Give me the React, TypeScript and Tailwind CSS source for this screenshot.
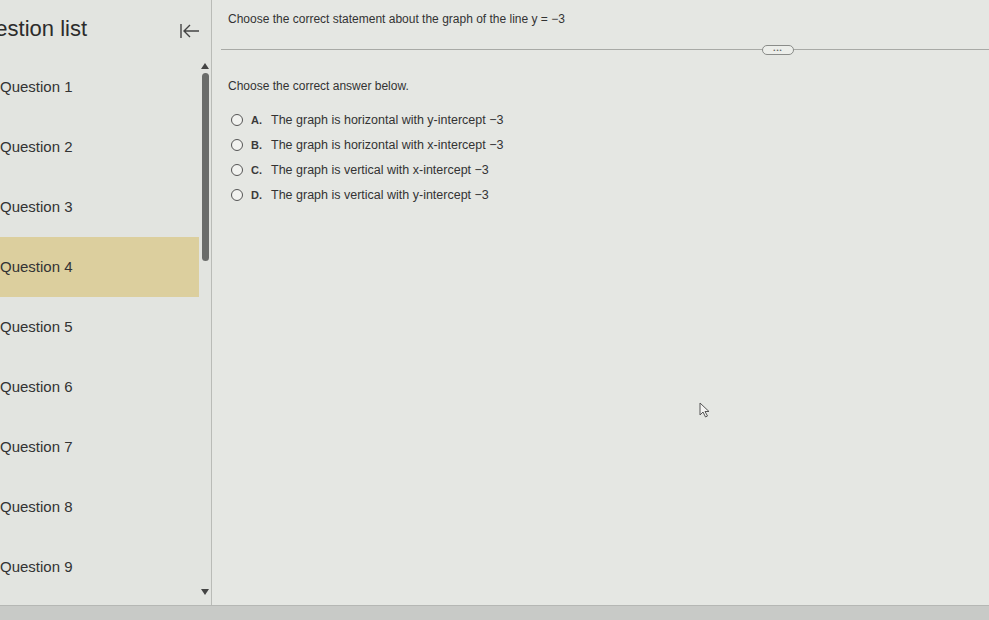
import React from 'react';

const questions = [1, 2, 3, 4, 5, 6, 7, 8, 9];

const options = [
    { letter: 'A', text: 'The graph is horizontal with y-intercept \u22123' },
    { letter: 'B', text: 'The graph is horizontal with x-intercept \u22123' },
    { letter: 'C', text: 'The graph is vertical with x-intercept \u22123' },
    { letter: 'D', text: 'The graph is vertical with y-intercept \u22123' },
];

function Sidebar() {
    return (
        <aside className="w-[212px] shrink-0 flex flex-col bg-[#e2e4e0] border-r border-[#b9bbb7] overflow-hidden">
            <div className="h-[57px] shrink-0 flex items-center justify-between pr-[10px]">
                <span className="ml-[-34px] text-[22px] text-[#2c2c2c] leading-none pt-[1px]">Question list</span>
                <svg width="22" height="18" viewBox="0 0 22 18" className="text-[#444] mt-[4px]">
                    <path d="M2 2v14M20 9H5M11 3L5 9l6 6" fill="none" stroke="currentColor" strokeWidth="1.4" />
                </svg>
            </div>
            <div className="flex flex-1">
                <ul className="w-[200px] flex flex-col">
                    {questions.map((n) => (
                        <li
                            key={n}
                            className={`h-[60px] flex items-center text-[15px] text-[#333] ${n === 4 ? 'bg-[#dccf9e]' : ''}`}
                        >
                            Question {n}
                        </li>
                    ))}
                </ul>
                <div className="w-[12px] flex flex-col items-center pt-[6px]">
                    <span className="w-0 h-0 border-x-[4px] border-x-transparent border-b-[6px] border-b-[#444]" />
                    <span className="w-[7px] h-[188px] mt-[4px] rounded-full bg-[#6a6c6a]" />
                    <span className="flex-1" />
                    <span className="w-0 h-0 border-x-[4px] border-x-transparent border-t-[6px] border-t-[#444] mb-[10px]" />
                </div>
            </div>
        </aside>
    );
}

function Radio() {
    return <span className="w-[12px] h-[12px] shrink-0 rounded-full border border-[#555] bg-[#f2f3f0]" />;
}

function Main() {
    return (
        <main className="flex-1 relative flex flex-col bg-[#e5e7e3]">
            <div className="h-[49px] shrink-0 pl-[16px] pt-[10px] text-[12px] text-[#333]">
                Choose the correct statement about the graph of the line y = {'\u2212'}3
            </div>
            <div className="relative ml-[9px] border-t border-[#a8aaa6]">
                <span className="absolute left-[541px] top-[-5px] w-[32px] h-[10px] rounded-full border border-[#8a8c89] bg-[#eceeea] flex items-center justify-center">
                    <span className="text-[6px] leading-none text-[#666] tracking-[1px]">•••</span>
                </span>
            </div>
            <div className="pl-[16px] pt-[27px] text-[12px] text-[#333]">Choose the correct answer below.</div>
            <ul className="pl-[19px] pt-[17px] flex flex-col gap-[9px]">
                {options.map((o) => (
                    <li key={o.letter} className="h-[16px] flex items-center text-[12.5px] text-[#333]">
                        <Radio />
                        <span className="w-[20px] pl-[8px] font-bold text-[#3a3a3a] text-[11px]">{o.letter}.</span>
                        <span className="pl-[8px]">{o.text}</span>
                    </li>
                ))}
            </ul>
            <svg className="absolute left-[487px] top-[402px]" width="12" height="16" viewBox="0 0 12 16">
                <path d="M1 1v12l3-3 2.5 5 2-1-2.5-4.5H10z" fill="#f4f4f2" stroke="#555" strokeWidth="1" />
            </svg>
        </main>
    );
}

export default function App() {
    return (
        <div className="w-[989px] h-[620px] flex flex-col overflow-hidden font-['Liberation_Sans',Arial,sans-serif]">
            <div className="flex flex-1 min-h-0">
                <Sidebar />
                <Main />
            </div>
            <div className="h-[15px] shrink-0 bg-[#c8cac7] border-t border-[#b5b7b4]" />
        </div>
    );
}
